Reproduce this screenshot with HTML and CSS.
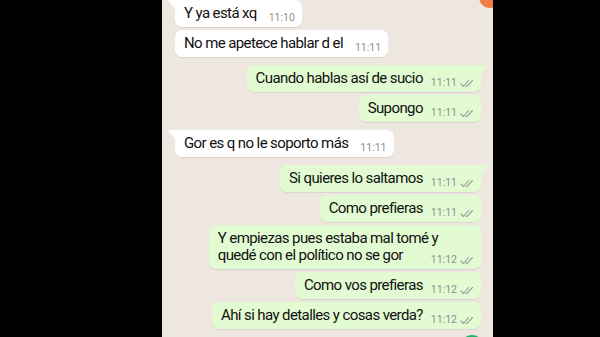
FILE: index.html
```html
<!DOCTYPE html>
<html lang="es">
<head>
    <meta charset="UTF-8">
    <meta name="viewport" content="width=device-width, initial-scale=1.0">
    <title>Chat</title>
    <link rel="stylesheet" href="styles.css">
</head>
<body>
    <div class="screen">
        <div class="chat">
            <div class="msg in tail">Y ya está xq<span class="meta">11:10</span></div>
            <div class="msg in">No me apetece hablar d el<span class="meta">11:11</span></div>

            <div class="msg out tail">Cuando hablas así de sucio<span class="meta">11:11 <svg class="ticks" viewBox="0 0 14 9"><path d="M1 5l2.5 2.5L8.5 1.5M6 7l.8.6L12.5 1.5"/></svg></span></div>
            <div class="msg out">Supongo<span class="meta">11:11 <svg class="ticks" viewBox="0 0 14 9"><path d="M1 5l2.5 2.5L8.5 1.5M6 7l.8.6L12.5 1.5"/></svg></span></div>

            <div class="msg in tail">Gor es q no le soporto más<span class="meta">11:11</span></div>

            <div class="msg out tail">Si quieres lo saltamos<span class="meta">11:11 <svg class="ticks" viewBox="0 0 14 9"><path d="M1 5l2.5 2.5L8.5 1.5M6 7l.8.6L12.5 1.5"/></svg></span></div>
            <div class="msg out">Como prefieras<span class="meta">11:11 <svg class="ticks" viewBox="0 0 14 9"><path d="M1 5l2.5 2.5L8.5 1.5M6 7l.8.6L12.5 1.5"/></svg></span></div>
            <div class="msg out multi">Y empiezas pues estaba mal tomé y<br>quedé con el político no se gor<span class="meta">11:12 <svg class="ticks" viewBox="0 0 14 9"><path d="M1 5l2.5 2.5L8.5 1.5M6 7l.8.6L12.5 1.5"/></svg></span></div>
            <div class="msg out">Como vos prefieras<span class="meta">11:12 <svg class="ticks" viewBox="0 0 14 9"><path d="M1 5l2.5 2.5L8.5 1.5M6 7l.8.6L12.5 1.5"/></svg></span></div>
            <div class="msg out">Ahí si hay detalles y cosas verda?<span class="meta">11:12 <svg class="ticks" viewBox="0 0 14 9"><path d="M1 5l2.5 2.5L8.5 1.5M6 7l.8.6L12.5 1.5"/></svg></span></div>

            <span class="fab fab-top"></span>
            <span class="fab fab-bottom"></span>
        </div>
    </div>
</body>
</html>
```

FILE: styles.css
```css
body {
    margin: 0;
    background: #000;
    font-family: Roboto, "Noto Sans", Arial, sans-serif;
}

.screen {
    height: 337px;
    overflow: hidden;
}

.chat {
    position: relative;
    margin-left: 162px;
    width: 331px;
    height: 337px;
    box-sizing: border-box;
    padding: 0 12px 0 13px;
    background: #ede7e0;
    display: flex;
    flex-direction: column;
    overflow: hidden;
}

.msg {
    position: relative;
    margin-top: 3px;
    padding: 5px 7px 5px 9px;
    border-radius: 7px;
    font-size: 15px;
    letter-spacing: -0.6px;
    line-height: 17px;
    color: #111;
    white-space: nowrap;
    box-shadow: 0 1px 0.5px rgba(0, 0, 0, 0.08);
}

.msg.tail {
    margin-top: 8px;
}

.msg.tail:first-child {
    margin-top: 0;
}

.in {
    align-self: flex-start;
    background: #fff;
}

.out {
    align-self: flex-end;
    background: #e3fbd2;
}

.in.tail {
    border-top-left-radius: 0;
}

.out.tail {
    border-top-right-radius: 0;
}

.in.tail::before,
.out.tail::before {
    content: "";
    position: absolute;
    top: 0;
    width: 0;
    height: 0;
    border-top: 9px solid;
}

.in.tail::before {
    left: -7px;
    border-left: 7px solid transparent;
    border-top-color: #fff;
}

.out.tail::before {
    right: -7px;
    border-right: 7px solid transparent;
    border-top-color: #e3fbd2;
}

.meta {
    display: inline-flex;
    align-items: center;
    gap: 3px;
    position: relative;
    top: 3px;
    margin-left: 12px;
    font-size: 10.5px;
    letter-spacing: 0;
    line-height: 12px;
    color: #8e8e8e;
}

.out .meta {
    margin-left: 8px;
}

.out.multi .meta {
    margin-left: 28px;
}

.ticks {
    width: 14px;
    height: 9px;
    fill: none;
    stroke: #9a9a9a;
    stroke-width: 1.1;
    stroke-linecap: round;
    stroke-linejoin: round;
}

.fab {
    position: absolute;
    border-radius: 50%;
}

.fab-top {
    right: -8px;
    top: -14px;
    width: 22px;
    height: 22px;
    background: #f07d43;
}

.fab-bottom {
    right: 9px;
    bottom: -22px;
    width: 24px;
    height: 24px;
    background: #22b36a;
}
```
